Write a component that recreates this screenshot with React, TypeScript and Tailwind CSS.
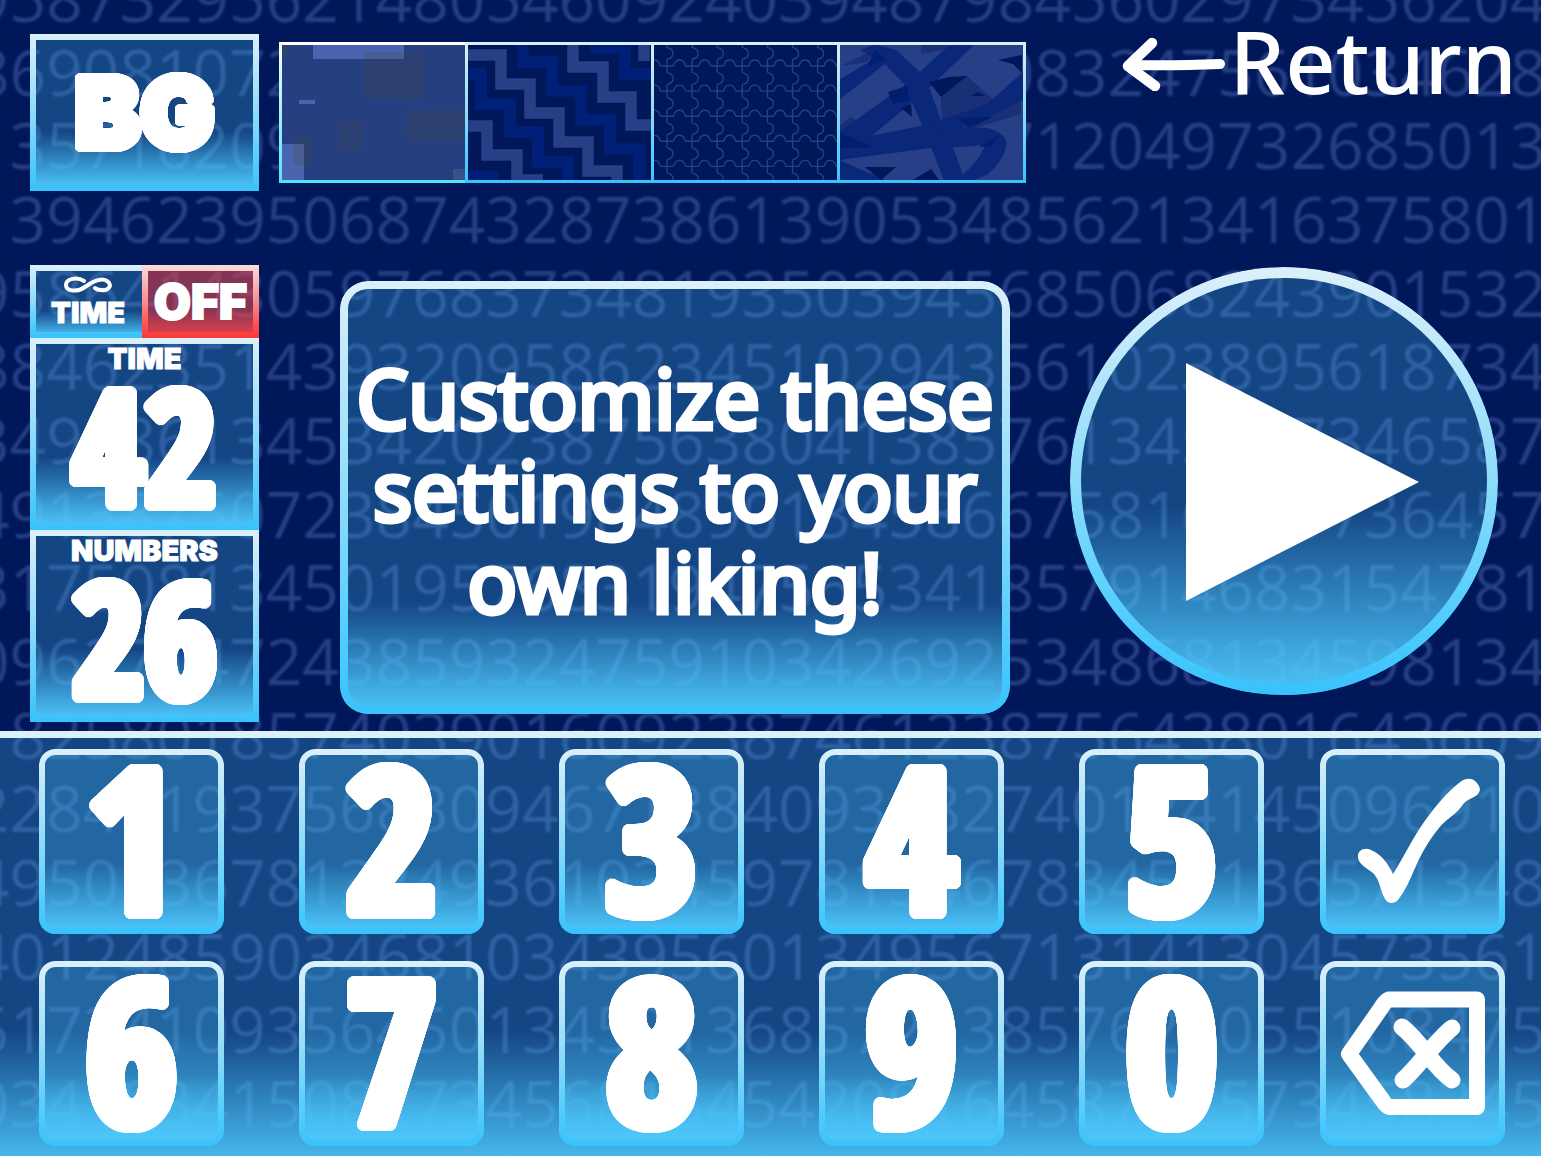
import { useState } from "react";
import type { ReactNode } from "react";
import clsx from "clsx";

const digitRows = [
  "9587329562148054609240394879845602973456204",
  "8690810723465918203746519283083247561034628",
  "\u2007357162094826105739284615093712049732685013",
  "\u2007394623950687432873861390534856213416375801",
  "9586414305976837348193503945685068243901532",
  "8846235143932095862345102943561023895618734",
  "3495861345342023875638041385761345827346587",
  "4913875072384501984890134586675816091736457",
  "3175081345019576831947565341857914683154781",
  "0962714724385932475910342692534868134598134",
  "\u2007825801857403901609238746123875643801643609",
  "2284019375683094671384093182740124145096910",
  "4950136781324936103459781346783457136571348",
  "4012485903468103439560134956713141304573561",
  "5173410935645013450136857213857620055108475",
  "0341834150827345681345420916458732573458345",
];

// gradient outline drawn as a ring, so the fill inside stays see-through
const ring =
  "relative before:pointer-events-none before:absolute before:inset-0 before:rounded-[inherit] before:content-[''] before:[mask:linear-gradient(#fff_0_0)_content-box_exclude,linear-gradient(#fff_0_0)]";
const blueRing =
  "before:bg-[linear-gradient(#dcf0fa,#8ddcfa_50%,#55cefd_80%,#38c2fb)]";
const redRing =
  "before:bg-[linear-gradient(#fbdcdc,#fb8c8c_50%,#fb5555_80%,#fb3838)]";
const blueFill =
  "bg-[linear-gradient(rgba(71,188,240,0.28)_62%,rgba(77,200,252,0.95)_96%)]";

const chunky = "font-['Inter',sans-serif] font-black leading-none text-white";
const tall =
  "font-['Open_Sans_Condensed','Roboto_Condensed','Noto_Sans_Condensed','Liberation_Sans',sans-serif] text-white";

// bubble lettering: copies of the text set round a circle give soft corners
function bubble(radius: number) {
  const steps = 48;
  const textShadow = Array.from({ length: steps }, (_, i) => {
    const angle = (i / steps) * 2 * Math.PI;
    const x = (Math.cos(angle) * radius).toFixed(2);
    const y = (Math.sin(angle) * radius).toFixed(2);
    return `${x}px ${y}px 0 #fff`;
  }).join(",");
  return { textShadow };
}

function Backdrop() {
  return (
    <div
      aria-hidden="true"
      className="pointer-events-none absolute -top-[39px] bottom-4 -left-[27px] grid auto-rows-fr items-center font-['Open_Sans',sans-serif] text-[64px] leading-none font-medium whitespace-pre text-[#253e84] blur-[1px] select-none"
    >
      {digitRows.map((row, i) => (
        <div key={i} className="flex items-center">
          {row}
        </div>
      ))}
    </div>
  );
}

function Blocks() {
  return (
    <svg viewBox="0 0 189 141" className="size-full">
      <rect width="189" height="141" fill="#263f80" />
      <g fill="#4b64ae">
        <rect x="34" y="2" width="91" height="15" />
        <rect x="20" y="58" width="16" height="4" />
        <rect x="2" y="102" width="23" height="39" />
      </g>
      <g fill="#46443f" fillOpacity="0.22">
        <rect x="2" y="2" width="8" height="12" />
        <rect x="85" y="10" width="61" height="47" />
        <rect x="127" y="68" width="62" height="31" />
        <rect x="60" y="78" width="24" height="30" />
        <rect x="15" y="93" width="18" height="30" />
      </g>
      <rect x="174" y="127" width="15" height="14" fill="#3a5088" />
    </svg>
  );
}

function Stairs() {
  return (
    <svg viewBox="0 0 189 141" className="size-full">
      <rect width="189" height="141" fill="#00185a" />
      <g fill="none" strokeWidth="11.5">
        <g stroke="#263f86">
          <path d="M0 13H36V42H65V71H94V100H123V129H152V145" />
          <path d="M108 0V25H138V55H166V83H195" />
          <path d="M0 84H22V113H52V138H78" />
          <path d="M179 0V19" />
        </g>
        <g stroke="#001f78">
          <path d="M0 32H16V62H45V90H73V120H103V145" />
          <path d="M58 0V20H87V49H116V78H145V107H174V145" />
          <path d="M125 6H160V32H195" />
          <path d="M0 135H33" />
        </g>
      </g>
    </svg>
  );
}

function Puzzle() {
  const cols = [-1, 0, 1, 2, 3, 4, 5, 6];
  const rows = [-1, 0, 1, 2, 3, 4];
  return (
    <svg viewBox="0 0 189 141" className="size-full">
      <rect width="189" height="141" fill="#00185a" />
      <g fill="none" stroke="#263f86" strokeWidth="1.4">
        {rows.map((r) =>
          cols.map((c) => (
            <path
              key={`${r}-${c}`}
              transform={`translate(${16 + c * 25.1} ${24 + r * 25.1})`}
              d="M0 0H6C8 0 6 -6 12.500 -6S17 0 19 0H25M0 0V6C0 8 6 6 6 12.500S0 17 0 19V25"
            />
          ))
        )}
      </g>
    </svg>
  );
}

function Strokes() {
  return (
    <svg viewBox="0 0 189 141" className="size-full">
      <rect width="189" height="141" fill="#263f86" />
      <path fill="#192f76" d="M104 55L130 34L166 66L184 58V72L138 86L105 80ZM4 24L40 6L30 20ZM84 3H110L106 8L84 12ZM2 84L14 75L26 82L2 98Z" />
      <g fill="#0a277a">
        <path d="M38 2L59 8L83 30L93 48L104 78L116 105L126 133L129 141H108L94 105L85 83L74 58L68 43L48 22L23 8Z" />
        <path d="M113 2H138L92 46L30 98L2 120V90L68 43L83 30Z" />
        <path d="M2 38L48 10V22L2 58Z" />
        <path d="M186 30V58L150 76L105 92L36 94L80 85L104 78L150 62Z" />
        <path d="M2 100L85 84L116 90L140 104L94 106L2 118Z" />
        <path d="M105 84L150 86Q172 92 169 105Q166 120 150 133L129 141L126 132Q140 122 148 104L112 100Z" />
        <path d="M2 118L55 141H2Z" />
      </g>
      <g fill="#001f70">
        <path d="M38 8L50 18L30 24ZM51 50L70 44L72 58L56 62ZM120 76L156 75L132 86ZM2 90L36 105L2 106ZM142 105L162 93L154 104Z" />
      </g>
      <g fill="#00185a">
        <path d="M92 40L112 35L130 34L104 55ZM161 18L185 13V31L176 22ZM134 54L141 50L148 54ZM64 66L74 62L75 75ZM28 125H59L44 138ZM74 139L94 127L103 139Z" />
      </g>
    </svg>
  );
}

const thumbs = [
  { name: "Blocks", art: <Blocks /> },
  { name: "Stairs", art: <Stairs /> },
  { name: "Puzzle", art: <Puzzle /> },
  { name: "Strokes", art: <Strokes /> },
];

function ReturnArrow() {
  return (
    <svg
      viewBox="0 0 104 54"
      className="mt-2 mr-1 h-[54px] w-[104px]"
      aria-hidden="true"
    >
      <g fill="none" stroke="#fff" strokeLinecap="round" strokeLinejoin="round">
        <path strokeWidth="10.500" d="M30 6L6 29L33 49" />
        <path strokeWidth="10" d="M9 28Q50 29 98 27" />
      </g>
    </svg>
  );
}

function Infinity() {
  return (
    <svg viewBox="0 0 50 18" className="h-[18px] w-[50px]" aria-hidden="true">
      <path
        d="M21 5C15 1 3 2 3 9S15 16 22 11S38 1 44 5S46 15 38 14Q34 14 32 12"
        fill="none"
        stroke="#fff"
        strokeWidth="4"
        strokeLinecap="round"
      />
    </svg>
  );
}

function Check() {
  return (
    <svg viewBox="0 0 185 185" className="size-full" aria-hidden="true">
      <path
        fill="#fff"
        d="M38 107C38 101 45 98 51 101C61 105 68 114 73 125C84 108 92 90 104 73C115 58 126 44 139 34C146 28 153 29 157 34C162 40 160 45 154 48C148 51 145 52 142 57C134 67 126 70 119 79C108 92 101 106 95 119C90 131 85 142 78 151C74 155 68 155 65 150C60 141 60 132 54 125C49 120 37 115 38 107Z"
      />
    </svg>
  );
}

function Backspace() {
  return (
    <svg viewBox="0 0 185 185" className="size-full" aria-hidden="true">
      <g fill="none" stroke="#fff" strokeLinejoin="round" strokeLinecap="round">
        <path strokeWidth="16" d="M157 38.500V146H69Q66 145 63 140L29 93L61 47Q66 39 69 38.500Z" />
        <path strokeWidth="17" d="M82 66Q92 74 107 93T132 119M132 67Q124 73 107 93T83 119" />
      </g>
    </svg>
  );
}

function Key({
  label,
  onClick,
  children,
}: {
  label?: string;
  onClick: () => void;
  children: ReactNode;
}) {
  return (
    <button
      type="button"
      aria-label={label}
      onClick={onClick}
      className={clsx(
        ring,
        blueRing,
        blueFill,
        "flex size-[185px] items-center justify-center rounded-2xl before:p-1.5"
      )}
    >
      {children}
    </button>
  );
}

function Setting({
  title,
  value,
  active,
  onSelect,
}: {
  title: string;
  value: string;
  active: boolean;
  onSelect: () => void;
}) {
  return (
    <button
      type="button"
      aria-pressed={active}
      onClick={onSelect}
      className={clsx(
        ring,
        blueRing,
        blueFill,
        "flex h-48 w-full flex-col items-center pt-1.5 before:p-1.5"
      )}
    >
      <span
        className={clsx(chunky, "text-[29px] [-webkit-text-stroke:1px_#fff]")}
      >
        {title}
      </span>
      <span
        className={clsx(tall, "mt-0.5 text-[156px] leading-[140px]")}
        style={bubble(6)}
      >
        {value}
      </span>
    </button>
  );
}

function App() {
  const [time, setTime] = useState("42");
  const [numbers, setNumbers] = useState("26");
  const [field, setField] = useState<"time" | "numbers">("time");
  const [infinite, setInfinite] = useState(false);

  const update = field === "time" ? setTime : setNumbers;
  const press = (digit: string) => update((v) => (v + digit).slice(-2));

  return (
    <main className="relative flex min-h-screen flex-col overflow-hidden bg-[#00185a]">
      <Backdrop />

      <header className="relative flex items-start pt-[34px] pr-6 pl-[30px]">
        <button
          type="button"
          className={clsx(
            ring,
            blueRing,
            blueFill,
            chunky,
            "h-[157px] w-[229px] shrink-0 text-[98px] before:p-1.5"
          )}
          style={bubble(4)}
        >
          BG
        </button>
        <div className="mt-2 ml-5 flex">
          {thumbs.map((thumb, i) => (
            <button
              key={thumb.name}
              type="button"
              aria-label={thumb.name}
              className={clsx(
                ring,
                i === 0
                  ? "before:bg-[linear-gradient(#fff,#4fe4fb)]"
                  : blueRing,
                "-mr-[3px] h-[141px] w-[189px] before:p-[3px]"
              )}
            >
              {thumb.art}
            </button>
          ))}
        </div>
        <button
          type="button"
          className="-mt-[18px] ml-auto flex items-center font-['Noto_Sans',sans-serif] text-[88px] leading-[88px] font-medium text-white"
        >
          <ReturnArrow />
          Return
        </button>
      </header>

      <section className="relative mt-[74px] flex items-start pr-[43px] pb-[9px] pl-[30px]">
        <div className="w-[229px] shrink-0">
          <div className="flex h-[73px]">
            <div
              className={clsx(
                ring,
                blueRing,
                blueFill,
                "flex w-[112px] flex-col items-center pt-[11px] pl-1 before:py-1.5 before:pl-1.5"
              )}
            >
              <Infinity />
              <span
                className={clsx(
                  chunky,
                  "mt-1 text-[29px] [-webkit-text-stroke:1px_#fff]"
                )}
              >
                TIME
              </span>
            </div>
            <button
              type="button"
              aria-label="Infinite time"
              aria-pressed={infinite}
              onClick={() => setInfinite(!infinite)}
              className={clsx(
                ring,
                redRing,
                chunky,
                "flex-1 bg-[linear-gradient(rgba(220,70,80,0.6)_60%,rgba(251,70,70,0.95))] text-[48px] [-webkit-text-stroke:2px_#fff] before:p-1.5"
              )}
            >
              {infinite ? "ON" : "OFF"}
            </button>
          </div>
          <Setting
            title="TIME"
            value={time}
            active={field === "time"}
            onSelect={() => setField("time")}
          />
          <Setting
            title="NUMBERS"
            value={numbers}
            active={field === "numbers"}
            onSelect={() => setField("numbers")}
          />
        </div>

        <div
          className={clsx(
            ring,
            blueRing,
            "mt-4 ml-[81px] flex h-[433px] flex-1 items-center justify-center rounded-[28px] bg-[linear-gradient(rgba(71,188,240,0.28)_74%,rgba(77,200,252,0.95)_98%)] pb-[18px] before:p-2"
          )}
        >
          <p className="text-center font-['Noto_Sans',sans-serif] text-[82px] leading-[92px] whitespace-nowrap text-white [-webkit-text-stroke:5px_#fff]">
            Customize these
            <br />
            settings to your
            <br />
            own liking!
          </p>
        </div>

        <button
          type="button"
          aria-label="Play"
          className={clsx(
            ring,
            blueRing,
            "mt-0.5 ml-[60px] size-[428px] shrink-0 rounded-full bg-[linear-gradient(rgba(71,188,240,0.28)_56%,rgba(77,200,252,0.95)_98%)] before:p-[11px]"
          )}
        >
          <svg viewBox="0 0 428 428" className="size-full" aria-hidden="true">
            <path d="M116 96L349 215L116 334Z" fill="#fff" />
          </svg>
        </button>
      </section>

      <section className="relative flex flex-1 gap-14 border-t-[7px] border-[#dcf0fa] bg-[linear-gradient(rgba(71,188,240,0.28)_70%,rgba(77,200,252,0.9))] pt-[11px] pr-9 pb-2.5 pl-[39px]">
        <div className="grid flex-1 grid-cols-[repeat(5,185px)] content-start justify-between gap-y-[27px]">
          {["1", "2", "3", "4", "5", "6", "7", "8", "9", "0"].map((digit) => (
            <Key key={digit} onClick={() => press(digit)}>
              <span
                className={clsx(tall, "pb-3 text-[200px] leading-[185px]")}
                style={bubble(6)}
              >
                {digit}
              </span>
            </Key>
          ))}
        </div>
        <div className="flex flex-col gap-[27px]">
          <Key label="Confirm" onClick={() => setField("numbers")}>
            <Check />
          </Key>
          <Key label="Delete" onClick={() => update((v) => v.slice(0, -1))}>
            <Backspace />
          </Key>
        </div>
      </section>
    </main>
  );
}

export default App;
